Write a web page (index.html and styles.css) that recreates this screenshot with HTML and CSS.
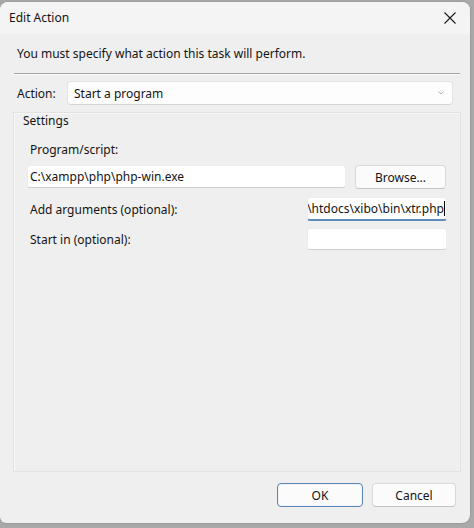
FILE: index.html
```html
<!DOCTYPE html>
<html>
<head>
<meta charset="utf-8">
<link rel="stylesheet" href="styles.css">
</head>
<body>
<div class="window">
  <div class="titlebar">
    <span class="title">Edit Action</span>
    <svg class="close" width="12" height="12" viewBox="0 0 12 12"><path d="M0.5 0.5L11.5 11.5M11.5 0.5L0.5 11.5" stroke="#1a1a1a" stroke-width="1.1" fill="none"/></svg>
  </div>
  <div class="content">
    <div class="instruction">You must specify what action this task will perform.</div>
    <div class="separator"></div>
    <div class="action-row">
      <span class="action-label">Action:</span>
      <div class="select">
        <span>Start a program</span>
        <svg width="6" height="4" viewBox="0 0 6 4"><path d="M0.5 0.5L3 3L5.5 0.5" stroke="#b0b0b0" stroke-width="1" fill="none"/></svg>
      </div>
    </div>
    <div class="group">
      <div class="legend">Settings</div>
      <div class="field-label">Program/script:</div>
      <div class="program-row">
        <div class="input wide">C:\xampp\php\php-win.exe</div>
        <div class="button browse">Browse...</div>
      </div>
      <div class="row args-row">
        <span class="row-label">Add arguments (optional):</span>
        <div class="input narrow focused"><span class="scroll">C:\xampp\htdocs\xibo\bin\xtr.php<span class="caret"></span></span></div>
      </div>
      <div class="row start-row">
        <span class="row-label">Start in (optional):</span>
        <div class="input narrow short"></div>
      </div>
    </div>
    <div class="buttons">
      <div class="button default">OK</div>
      <div class="button">Cancel</div>
    </div>
  </div>
</div>
</body>
</html>
```

FILE: styles.css
```css
html, body {
  margin: 0;
  padding: 0;
}
body {
  width: 474px;
  height: 528px;
  background: #a9a9a9;
  font-family: "Noto Sans", "Open Sans", sans-serif;
  font-size: 12px;
  color: #141414;
  overflow: hidden;
}
.window {
  width: 470px;
  height: 521px;
  margin-top: 2px;
  background: #efefef;
  border-radius: 8px 8px 8px 6px;
  overflow: hidden;
  box-shadow: 0 0 2px rgba(0,0,0,0.25);
}
.titlebar {
  height: 32px;
  background: #f4f4f4;
  display: flex;
  align-items: center;
  justify-content: space-between;
  padding: 0 8px 0 9px;
}
.title {
  font-size: 12px;
  line-height: 16px;
}
.close {
  margin-right: 6px;
}
.content {
  padding: 0 13px;
}
.instruction {
  margin-top: 12px;
  padding-left: 4px;
  line-height: 16px;
}
.separator {
  margin-top: 11px;
  margin-left: 1px;
  width: 446px;
  height: 1px;
  background: #a3a3a3;
  border-bottom: 1px solid #fafafa;
}
.action-row {
  display: flex;
  align-items: center;
  margin-top: 6px;
  padding-left: 4px;
}
.action-label {
  width: 50px;
}
.select {
  width: 370px;
  height: 22px;
  background: #fdfdfd;
  border: 1px solid #e3e3e3;
  border-bottom-color: #d6d6d6;
  border-radius: 4px;
  display: flex;
  align-items: center;
  justify-content: space-between;
  padding: 0 8px 0 6px;
}
.group {
  margin-top: 7px;
  width: 446px;
  height: 358px;
  border: 1px solid #e2e2e2;
  box-shadow: inset 1px 1px 0 #f7f7f7;
}
.legend {
  padding-left: 9px;
  line-height: 16px;
}
.field-label {
  margin-top: 13px;
  padding-left: 16px;
  line-height: 16px;
}
.program-row {
  display: flex;
  align-items: flex-start;
  gap: 9px;
  margin-top: 7px;
  padding-left: 13px;
}
.input {
  box-sizing: border-box;
  background: #ffffff;
  border: 1px solid #ececec;
  border-bottom-color: #cfcfcf;
  border-radius: 3px;
  display: flex;
  align-items: center;
  padding: 0 2px;
  white-space: nowrap;
  overflow: hidden;
}
.wide {
  width: 319px;
  height: 23px;
}
.button {
  box-sizing: border-box;
  height: 24px;
  background: #fbfbfb;
  border: 1px solid #d9d9d9;
  border-bottom-color: #c4c4c4;
  border-radius: 4px;
  display: flex;
  align-items: center;
  justify-content: center;
}
.browse {
  width: 91px;
}
.row {
  display: flex;
  align-items: center;
  justify-content: space-between;
  padding: 0 13px 0 16px;
}
.args-row {
  margin-top: 8px;
}
.start-row {
  margin-top: 7px;
}
.narrow {
  width: 140px;
  height: 24px;
}
.short {
  height: 22px;
}
.focused {
  justify-content: flex-end;
  border-bottom: 2px solid #5e8bb8;
  padding: 0 1px 0 0;
}
.scroll {
  display: flex;
  align-items: center;
  flex-shrink: 0;
}
.caret {
  display: inline-block;
  width: 1px;
  height: 15px;
  background: #000;
}
.buttons {
  display: flex;
  justify-content: flex-end;
  gap: 9px;
  margin-top: 11px;
  padding-right: 1px;
}
.buttons .button {
  width: 84px;
}
.buttons .default {
  width: 86px;
  border: 1px solid #5c87b4;
  box-shadow: inset 0 0 0 1px #eef3f9;
}
```
